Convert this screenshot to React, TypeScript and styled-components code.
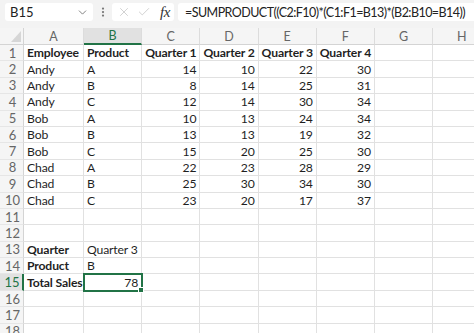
import React from "react";
import styled, { createGlobalStyle } from "styled-components";
import { ChevronDown, EllipsisVertical, X, Check } from "lucide-react";

const GlobalStyle = createGlobalStyle`
  html, body {
    margin: 0;
    padding: 0;
    background: #ffffff;
    overflow: hidden;
  }
  body {
    font-family: Lato, "Open Sans", sans-serif;
    color: #1f1f1f;
  }
`;

const GREEN = "#217346";

const Window = styled.div`
  width: 474px;
  height: 333px;
  overflow: hidden;
  background: #ffffff;
`;

const FormulaBar = styled.div`
  height: 28px;
  box-sizing: border-box;
  background: #f3f3f3;
  display: flex;
  align-items: flex-start;
  padding: 3px 0 0 5px;
`;

const NameBox = styled.div`
  flex: 0 0 88px;
  height: 18px;
  box-sizing: border-box;
  background: #ffffff;
  border-radius: 3px;
  display: flex;
  align-items: center;
  padding: 0 4px 0 5px;
  font-size: 13px;
  color: #222;
  svg {
    margin-left: auto;
    color: #666;
  }
`;

const Dots = styled.div`
  flex: 0 0 19px;
  display: flex;
  justify-content: center;
  align-items: center;
  height: 18px;
  color: #777;
`;

const Actions = styled.div`
  flex: 0 0 62px;
  height: 18px;
  box-sizing: border-box;
  background: #ffffff;
  border-radius: 3px;
  display: flex;
  align-items: center;
  padding-left: 5px;
  gap: 6px;
  color: #c4c4c4;
`;

const Fx = styled.span`
  font-family: "Liberation Serif", "DejaVu Serif", serif;
  font-style: italic;
  font-size: 15px;
  color: #333;
  margin-left: 3px;
  letter-spacing: -0.5px;
`;

const FormulaInput = styled.div`
  flex: 1 1 auto;
  min-width: 0;
  overflow: hidden;
  height: 18px;
  margin-left: 4px;
  background: #ffffff;
  border-radius: 3px 0 0 3px;
  display: flex;
  align-items: center;
  padding-left: 7px;
  font-size: 12.5px;
  letter-spacing: -0.55px;
  color: #222;
  white-space: nowrap;
`;

const Grid = styled.div`
  display: grid;
  grid-template-columns: 24px 60px repeat(7, 58.2px);
  grid-template-rows: 17px repeat(18, 16.4px);
`;

type Kind = "corner" | "col" | "row" | "cell";

const Cell = styled.div<{
  $kind: Kind;
  $num?: boolean;
  $bold?: boolean;
  $active?: boolean;
  $sel?: boolean;
}>`
  position: relative;
  box-sizing: border-box;
  display: flex;
  align-items: center;
  white-space: nowrap;
  overflow: visible;
  font-size: 12.2px;
  letter-spacing: -0.15px;
  border-right: 1px solid #e1e1e1;
  border-bottom: 1px solid #e1e1e1;
  background: #ffffff;
  color: #1f1f1f;
  padding: 0 3px;
  justify-content: ${(p) => (p.$num ? "flex-end" : "flex-start")};
  font-weight: ${(p) => (p.$bold ? 700 : 400)};

  ${(p) =>
    p.$kind === "col" &&
    `
    justify-content: center;
    letter-spacing: 0;
    background: ${p.$sel ? "#e1e1e1" : "#f5f5f5"};
    color: ${p.$sel ? GREEN : "#666"};
    border-right-color: #dcdcdc;
    border-bottom: ${p.$sel ? `2px solid ${GREEN}` : "1px solid #d4d4d4"};
    font-size: 12.5px;
  `}

  ${(p) =>
    p.$kind === "row" &&
    `
    justify-content: center;
    letter-spacing: 0;
    padding: 0 0 0 2px;
    background: ${p.$sel ? "#e1e1e1" : "#f5f5f5"};
    color: ${p.$sel ? GREEN : "#666"};
    border-right: ${p.$sel ? `2px solid ${GREEN}` : "1px solid #d4d4d4"};
    border-bottom-color: #e6e6e6;
    font-size: 13px;
  `}

  ${(p) =>
    p.$kind === "corner" &&
    `
    background: #f5f5f5;
    border-right-color: #d4d4d4;
    border-bottom-color: #d4d4d4;
    &::after {
      content: "";
      position: absolute;
      right: 2px;
      bottom: 2px;
      width: 0;
      height: 0;
      border-left: 10px solid transparent;
      border-bottom: 11px solid #d6d6d6;
    }
  `}

  ${(p) =>
    p.$active &&
    `
    z-index: 2;
    outline: 2px solid ${GREEN};
    outline-offset: -1px;
    &::after {
      content: "";
      position: absolute;
      right: -3px;
      bottom: -3px;
      width: 4px;
      height: 4px;
      background: ${GREEN};
      border: 1px solid #ffffff;
    }
  `}
`;

const cols = ["A", "B", "C", "D", "E", "F", "G", "H"];

type Val = string | number | null;

const rows: { cells: Val[]; bold?: boolean }[] = [
  { cells: ["Employee", "Product", "Quarter 1", "Quarter 2", "Quarter 3", "Quarter 4"], bold: true },
  { cells: ["Andy", "A", 14, 10, 22, 30] },
  { cells: ["Andy", "B", 8, 14, 25, 31] },
  { cells: ["Andy", "C", 12, 14, 30, 34] },
  { cells: ["Bob", "A", 10, 13, 24, 34] },
  { cells: ["Bob", "B", 13, 13, 19, 32] },
  { cells: ["Bob", "C", 15, 20, 25, 30] },
  { cells: ["Chad", "A", 22, 23, 28, 29] },
  { cells: ["Chad", "B", 25, 30, 34, 30] },
  { cells: ["Chad", "C", 23, 20, 17, 37] },
  { cells: [] },
  { cells: [] },
  { cells: ["Quarter", "Quarter 3"] },
  { cells: ["Product", "B"] },
  { cells: ["Total Sales", 78] },
  { cells: [] },
  { cells: [] },
  { cells: [] },
];

const labelRows = new Set([13, 14, 15]);

export default function App() {
  return (
    <Window>
      <GlobalStyle />
      <FormulaBar>
        <NameBox>
          B15
          <ChevronDown size={13} strokeWidth={1.5} />
        </NameBox>
        <Dots>
          <EllipsisVertical size={12} strokeWidth={2.5} />
        </Dots>
        <Actions>
          <X size={14} strokeWidth={1.3} />
          <Check size={14} strokeWidth={1.3} />
          <Fx>fx</Fx>
        </Actions>
        <FormulaInput>=SUMPRODUCT((C2:F10)*(C1:F1=B13)*(B2:B10=B14))</FormulaInput>
      </FormulaBar>
      <Grid>
        <Cell $kind="corner" />
        {cols.map((c) => (
          <Cell key={c} $kind="col" $sel={c === "B"}>
            {c}
          </Cell>
        ))}
        {rows.map((r, i) => {
          const n = i + 1;
          return (
            <React.Fragment key={n}>
              <Cell $kind="row" $sel={n === 15}>
                {n}
              </Cell>
              {cols.map((c, j) => {
                const v = r.cells[j] ?? null;
                return (
                  <Cell
                    key={c}
                    $kind="cell"
                    $num={typeof v === "number"}
                    $bold={r.bold || (labelRows.has(n) && j === 0)}
                    $active={n === 15 && c === "B"}
                  >
                    {v}
                  </Cell>
                );
              })}
            </React.Fragment>
          );
        })}
      </Grid>
    </Window>
  );
}
